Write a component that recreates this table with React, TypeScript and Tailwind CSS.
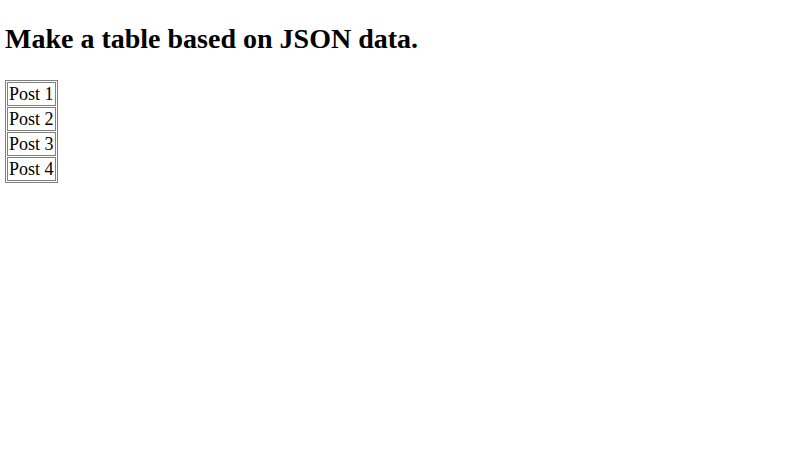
const posts = [
  { id: 1, title: 'Post 1' },
  { id: 2, title: 'Post 2' },
  { id: 3, title: 'Post 3' },
  { id: 4, title: 'Post 4' },
];

export default function App() {
  return (
    <div className="min-h-[450px] bg-white px-[5px] font-['Liberation_Serif',serif] text-black">
      <h1 className="pt-[23px] text-[28px] font-bold leading-[32px]">Make a table based on JSON data.</h1>
      <table className="mt-[25px] border-separate border-spacing-[1px] border border-[#808080] text-[18px]">
        <tbody>
          {posts.map((p) => (
            <tr key={p.id}>
              <td className="border border-[#808080] p-px leading-[20px]">{p.title}</td>
            </tr>
          ))}
        </tbody>
      </table>
    </div>
  );
}
